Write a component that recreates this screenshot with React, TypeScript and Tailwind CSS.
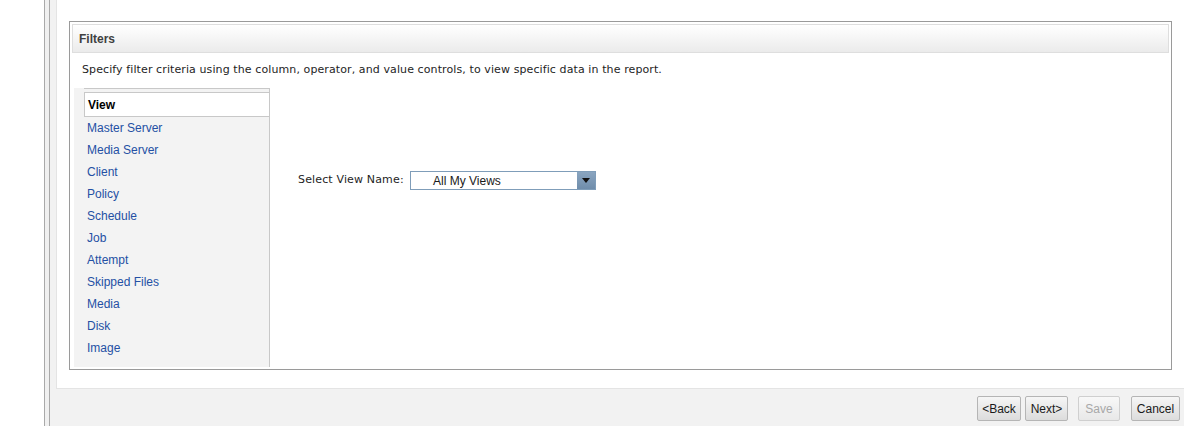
import React from 'react';

const navItems = [
  'Master Server',
  'Media Server',
  'Client',
  'Policy',
  'Schedule',
  'Job',
  'Attempt',
  'Skipped Files',
  'Media',
  'Disk',
  'Image',
];

const WizardButton = ({ label, disabled, className }: { label: string; disabled?: boolean; className?: string }) => (
  <button
    disabled={disabled}
    className={`h-[25px] border border-[#b5b5b5] rounded-[2px] bg-gradient-to-b from-[#f6f6f6] to-[#dcdcdc] text-[12px] font-['Liberation_Sans',Arial,sans-serif] ${
      disabled ? 'text-[#a8a8a8] from-[#f8f8f8] to-[#e8e8e8] border-[#cfcfcf]' : 'text-[#1a1a1a]'
    } ${className ?? ''}`}
  >
    {label}
  </button>
);

const App = () => {
  return (
    <div className="w-[1184px] h-[426px] flex bg-white overflow-hidden font-['Liberation_Sans',Arial,sans-serif]">
      {/* left gutter */}
      <div className="w-[44px] shrink-0 bg-white" />
      <div className="w-[6px] shrink-0 border-l border-r border-[#a9a9a9] bg-[#f0f0f0]" />

      {/* main */}
      <div className="flex-1 flex flex-col bg-[#f2f2f2] pl-[6px]">
        <div className="h-[389px] shrink-0 bg-white border-l border-b border-[#e4e4e4] pl-[12px] pr-[12px] pt-[21px] pb-[18px]">
          {/* Filters box */}
          <div className="h-full border border-[#9a9a9a] p-[2px] flex flex-col">
            <div className="h-[29px] shrink-0 border border-[#dedede] bg-gradient-to-b from-white to-[#ebebeb] flex items-center pl-[6px]">
              <span className="text-[12px] font-bold text-[#404040]">Filters</span>
            </div>
            <div className="h-[35px] shrink-0 flex items-center pl-[10px] text-[11px] text-[#1e1e1e] font-['DejaVu_Sans',Verdana,sans-serif] tracking-[0.1px]">
              Specify filter criteria using the column, operator, and value controls, to view specific data in the report.
            </div>

            <div className="flex-1 flex pl-[2px]">
              {/* nav */}
              <div className="w-[196px] h-[279px] shrink-0 bg-[#f3f3f3] border-r border-[#c8c8c8] flex flex-col">
                <div className="h-[5px] border-t border-b border-[#c8c8c8] ml-[10px] bg-[#f3f3f3]" />
                <div className="h-[23px] ml-[10px] bg-white border-l border-[#c8c8c8] flex items-center pl-[3px] text-[12px] font-bold text-black">
                  View
                </div>
                <div className="flex flex-col border-t border-[#c8c8c8] ml-[10px]">
                  {navItems.map((item) => (
                    <div key={item} className="h-[22px] flex items-center pl-[3px] text-[12px] text-[#2450a4]">
                      {item}
                    </div>
                  ))}
                </div>
              </div>

              {/* view select */}
              <div className="flex-1 pl-[28px] pt-[83px]">
                <div className="flex items-center">
                  <span className="text-[11px] text-[#1e1e1e] font-['DejaVu_Sans',Verdana,sans-serif] tracking-[0.15px] w-[112px]">
                    Select View Name:
                  </span>
                  <div className="w-[186px] h-[19px] border border-[#7f9db9] bg-white flex items-stretch">
                    <span className="flex-1 flex items-center pl-[22px] text-[12px] text-[#1a1a1a]">All My Views</span>
                    <span className="w-[18px] bg-gradient-to-b from-[#8aa5c0] to-[#6f8dab] flex items-center justify-center">
                      <svg width="8" height="5" viewBox="0 0 8 5">
                        <path d="M0 0 H8 L4 5 Z" fill="#111" />
                      </svg>
                    </span>
                  </div>
                </div>
              </div>
            </div>
          </div>
        </div>

        {/* footer buttons */}
        <div className="flex justify-end items-start pt-[7px] pr-[4px]">
          <WizardButton label="<Back" className="w-[44px]" />
          <WizardButton label="Next>" className="w-[43px] ml-[4px]" />
          <WizardButton label="Save" disabled className="w-[42px] ml-[10px]" />
          <WizardButton label="Cancel" className="w-[49px] ml-[11px]" />
        </div>
      </div>
    </div>
  );
};

export default App;
